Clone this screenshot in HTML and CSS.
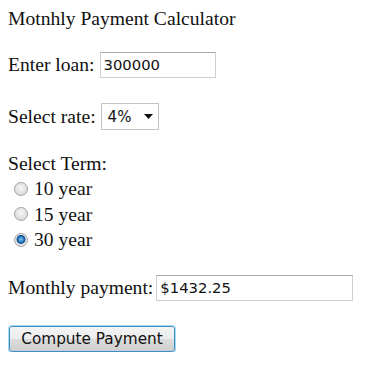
FILE: index.html
```html
<!DOCTYPE html>
<html>
<head>
<meta charset="utf-8">
<link rel="stylesheet" href="styles.css">
</head>
<body>
<div class="calc">
  <div class="title">Motnhly Payment Calculator</div>
  <div class="row loan-row">
    <span class="label">Enter loan:</span>
    <span class="field loan">300000</span>
  </div>
  <div class="row rate-row">
    <span class="label">Select rate:</span>
    <span class="select">4%<svg class="caret" width="9" height="5" viewBox="0 0 9 5"><path d="M0 0h9L4.5 5z" fill="#111"/></svg></span>
  </div>
  <div class="term">
    <div class="term-label">Select Term:</div>
    <div class="radio"><span class="dot"></span>10 year</div>
    <div class="radio"><span class="dot"></span>15 year</div>
    <div class="radio"><span class="dot checked"></span>30 year</div>
  </div>
  <div class="row pay-row">
    <span class="label">Monthly payment:</span>
    <span class="field pay">$1432.25</span>
  </div>
  <div class="btn-row">
    <span class="button">Compute Payment</span>
  </div>
</div>
</body>
</html>
```
FILE: styles.css
```css
html, body {
  margin: 0;
  padding: 0;
  background: #fff;
}
.calc {
  padding: 7px 0 0 8px;
  font-family: "Liberation Serif", "Times New Roman", serif;
  font-size: 19.6px;
  color: #111;
  display: flex;
  flex-direction: column;
  align-items: flex-start;
}
.title {
  line-height: 24px;
}
.row {
  display: flex;
  align-items: center;
  gap: 3px;
}
.loan-row { margin-top: 21px; }
.rate-row { margin-top: 25px; }
.pay-row { margin-top: 22px; }
.field {
  font-family: "DejaVu Sans", Tahoma, sans-serif;
  font-size: 14.8px;
  color: #111;
  border: 1px solid #cfcfcf;
  border-top-color: #a9a9a9;
  height: 24px;
  line-height: 24px;
  padding: 0 3px;
  box-sizing: content-box;
}
.loan { width: 108px; margin-left: 2px; }
.pay { width: 189px; }
.select {
  display: flex;
  align-items: center;
  gap: 13px;
  font-family: "DejaVu Sans", Tahoma, sans-serif;
  font-size: 15px;
  border: 1px solid #c4c4c4;
  height: 25px;
  padding: 0 5px 0 6px;
  margin-left: 2px;
}
.term {
  margin-top: 21px;
  display: flex;
  flex-direction: column;
}
.term-label { line-height: 25px; }
.radio {
  display: flex;
  align-items: center;
  line-height: 25.5px;
  padding-left: 6px;
  gap: 6px;
}
.dot {
  width: 12px;
  height: 12px;
  border-radius: 50%;
  border: 1px solid #a4a4a4;
  background: radial-gradient(circle at 50% 40%, #f6f6f6 0%, #dcdcdc 70%, #c9c9c9 100%);
}
.dot.checked {
  background: radial-gradient(circle at 50% 45%, #8ec8f0 0%, #2a7fc4 30%, #0d4f92 45%, #e8e8e8 55%, #cfcfcf 100%);
}
.btn-row {
  margin-top: 25px;
}
.button {
  display: inline-block;
  font-family: "DejaVu Sans", Tahoma, sans-serif;
  font-size: 15.3px;
  color: #111;
  border: 1px solid #3c8fc6;
  box-shadow: 0 0 0 1px #a8d8f4;
  border-radius: 3px;
  background: linear-gradient(#f4f4f4 0%, #ececec 48%, #dcdcdc 52%, #cfcfcf 100%);
  width: 164px;
  height: 24px;
  line-height: 24px;
  text-align: center;
  margin-left: 1px;
}
```
